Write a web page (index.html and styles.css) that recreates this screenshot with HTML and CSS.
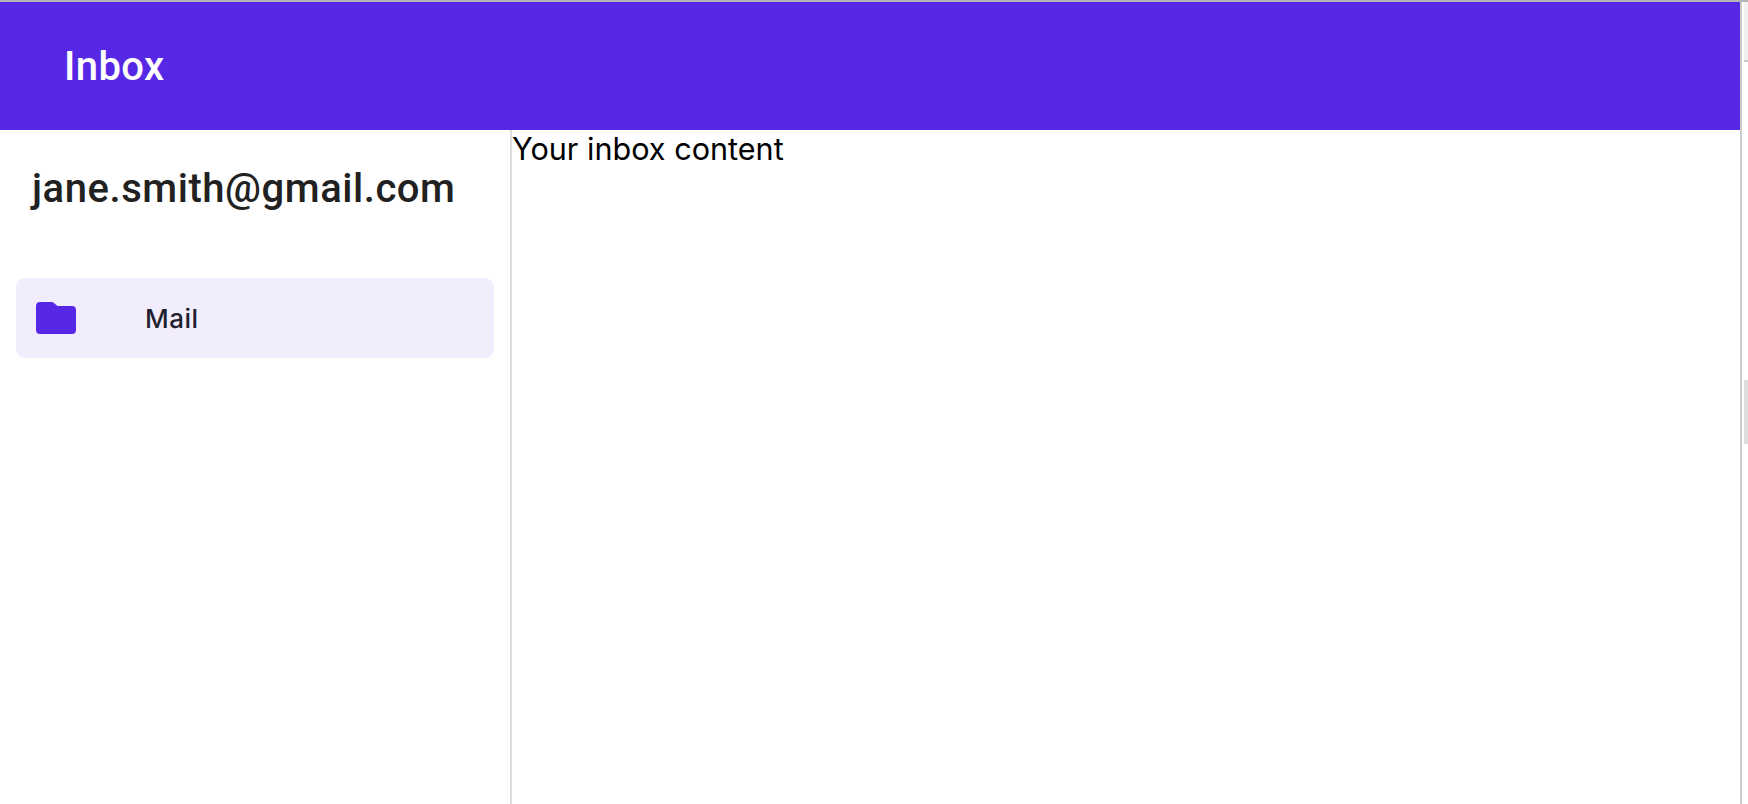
FILE: index.html
```html
<!DOCTYPE html>
<html lang="en">
<head>
    <meta charset="UTF-8">
    <meta name="viewport" content="width=device-width, initial-scale=1.0">
    <title>Inbox</title>
    <link rel="stylesheet" href="styles.css">
</head>
<body>

    <div class="app">
        <!-- Toolbar -->
        <header class="toolbar">
            <h1 class="toolbar-title">Inbox</h1>
        </header>

        <div class="main">
            <!-- Drawer -->
            <aside class="drawer">
                <h2 class="drawer-account">jane.smith@gmail.com</h2>
                <a class="drawer-item" href="#">
                    <svg class="drawer-icon" viewBox="0 0 40 32" aria-hidden="true">
                        <path d="M4 0h11.5q1.6 0 2.8 1.2L21.5 4H36q4 0 4 4v20q0 4-4 4H4q-4 0-4-4V4q0-4 4-4z"/>
                    </svg>
                    <span class="drawer-label">Mail</span>
                </a>
            </aside>

            <!-- Page Content -->
            <div class="content">Your inbox content</div>
        </div>
    </div>

    <!-- Window scrollbar strip -->
    <div class="scrollstrip">
        <div class="scrollstrip-cap"></div>
        <div class="scrollstrip-thumb"></div>
    </div>

</body>
</html>
```

FILE: styles.css
```css
/* Global */
html, body {
    height: 100%;
}

body {
    margin: 0;
    display: flex;
    overflow: hidden;
    background-color: #ffffff;
    color: #000000;
    box-sizing: border-box;
    border-top: 2px solid #b4b4b4;
}

/* App Frame */
.app {
    width: 1742px;
    box-sizing: border-box;
    border-right: 2px solid #cccccc;
    display: flex;
    flex-direction: column;
}

/* Toolbar */
.toolbar {
    height: 128px;
    flex-shrink: 0;
    background-color: #5727e6;
    display: flex;
    align-items: center;
    padding-left: 64px;
}

.toolbar-title {
    margin: 0;
    color: #ffffff;
    font-family: "Roboto", sans-serif;
    font-size: 40px;
    font-weight: 500;
    letter-spacing: 0.4px;
}

.main {
    flex-grow: 1;
    display: flex;
}

/* Drawer */
.drawer {
    width: 512px;
    flex-shrink: 0;
    box-sizing: border-box;
    border-right: 2px solid #dddddd;
    padding: 0 16px;
}

.drawer-account {
    margin: 0;
    padding: 36px 0 0 16px;
    height: 114px;
    box-sizing: border-box;
    color: #212121;
    font-family: "Roboto", sans-serif;
    font-size: 40px;
    font-weight: 500;
    letter-spacing: 0.55px;
    line-height: 46px;
    white-space: nowrap;
}

.drawer-item {
    margin-top: 34px;
    height: 80px;
    display: flex;
    align-items: center;
    padding-left: 20px;
    border-radius: 9px;
    background-color: #f1edfd;
    text-decoration: none;
}

.drawer-icon {
    width: 40px;
    height: 32px;
    fill: #5727e6;
}

.drawer-label {
    margin-left: 69px;
    color: #211f2e;
    font-family: "Inter", sans-serif;
    font-size: 26px;
    font-weight: 550;
    letter-spacing: 0.5px;
}

/* Page Content */
.content {
    flex-grow: 1;
    font-family: "Inter", sans-serif;
    font-size: 30.6px;
    line-height: 38px;
}

/* Scrollbar */
.scrollstrip {
    width: 6px;
    flex-shrink: 0;
    padding-left: 2px;
    box-sizing: border-box;
    margin-top: -2px;
}

.scrollstrip-cap {
    height: 60px;
    background-color: #f0f0f0;
    border-bottom: 2px solid #c8c8c8;
}

.scrollstrip-thumb {
    margin-top: 318px;
    height: 64px;
    background-color: #dddddd;
}
```
